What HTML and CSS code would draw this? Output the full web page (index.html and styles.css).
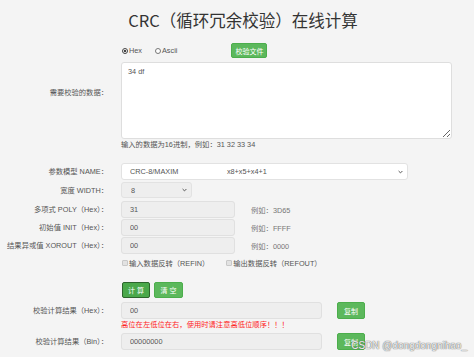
FILE: index.html
```html
<!DOCTYPE html>
<html lang="zh-CN">
<head>
    <meta charset="UTF-8">
    <meta name="viewport" content="width=device-width, initial-scale=1.0">
    <title>CRC（循环冗余校验）在线计算</title>
    <link rel="stylesheet" href="styles.css">
</head>
<body>
    <div class="container">
        <h1 class="title">CRC（循环冗余校验）在线计算</h1>

        <div class="row row-type">
            <span class="label"></span>
            <div class="field">
                <label class="radio"><input type="radio" name="type" checked>Hex</label>
                <label class="radio"><input type="radio" name="type">Ascii</label>
                <button class="btn btn-file">校验文件</button>
            </div>
        </div>

        <div class="row row-data">
            <label class="label label-top">需要校验的数据：</label>
            <div class="field">
                <textarea class="data-input">34 df</textarea>
                <div class="hint">输入的数据为16进制，例如：31 32 33 34</div>
            </div>
        </div>

        <div class="row row-name">
            <label class="label">参数模型 NAME：</label>
            <div class="field">
                <div class="select-wrap select-name">
                    <select>
                        <option>CRC-8/MAXIM&nbsp;&nbsp;&nbsp;&nbsp;&nbsp;&nbsp;&nbsp;&nbsp;&nbsp;&nbsp;&nbsp;&nbsp;&nbsp;&nbsp;&nbsp;&nbsp;&nbsp;&nbsp;&nbsp;&nbsp;&nbsp;&nbsp;&nbsp;&nbsp;x8+x5+x4+1</option>
                    </select>
                    <svg class="arrow" width="5" height="4" viewBox="0 0 5 4"><polyline points="0.6,1 2.5,2.9 4.4,1" fill="none" stroke="#555" stroke-width="1"/></svg>
                </div>
            </div>
        </div>

        <div class="row row-width">
            <label class="label">宽度 WIDTH：</label>
            <div class="field">
                <div class="select-wrap select-width">
                    <select>
                        <option>8</option>
                    </select>
                    <svg class="arrow" width="5" height="4" viewBox="0 0 5 4"><polyline points="0.6,1 2.5,2.9 4.4,1" fill="none" stroke="#555" stroke-width="1"/></svg>
                </div>
            </div>
        </div>

        <div class="row row-param">
            <label class="label">多项式 POLY（Hex）：</label>
            <div class="field">
                <input class="text-input param-input" type="text" value="31" readonly>
                <span class="example">例如：3D65</span>
            </div>
        </div>

        <div class="row row-param">
            <label class="label">初始值 INIT（Hex）：</label>
            <div class="field">
                <input class="text-input param-input" type="text" value="00" readonly>
                <span class="example">例如：FFFF</span>
            </div>
        </div>

        <div class="row row-param">
            <label class="label">结果异或值 XOROUT（Hex）：</label>
            <div class="field">
                <input class="text-input param-input" type="text" value="00" readonly>
                <span class="example">例如：0000</span>
            </div>
        </div>

        <div class="row row-check">
            <span class="label"></span>
            <div class="field">
                <label class="check"><input type="checkbox" disabled>输入数据反转（REFIN）</label>
                <label class="check"><input type="checkbox" disabled>输出数据反转（REFOUT）</label>
            </div>
        </div>

        <div class="row row-actions">
            <span class="label"></span>
            <div class="field">
                <button class="btn btn-calc">计算</button>
                <button class="btn btn-clear">清空</button>
            </div>
        </div>

        <div class="row row-result">
            <label class="label">校验计算结果（Hex）：</label>
            <div class="field">
                <input class="text-input result-input" type="text" value="00" readonly>
                <button class="btn btn-copy">复制</button>
            </div>
        </div>

        <div class="row row-warn">
            <span class="label"></span>
            <div class="field warn">高位在左低位在右，使用时请注意高低位顺序！！！</div>
        </div>

        <div class="row row-result row-bin">
            <label class="label">校验计算结果（Bin）：</label>
            <div class="field">
                <input class="text-input result-input" type="text" value="00000000" readonly>
                <button class="btn btn-copy">复制</button>
            </div>
        </div>
    </div>

    <div class="watermark">CSDN @dongdongnihao_</div>
</body>
</html>
```

FILE: styles.css
```css
* {
    margin: 0;
    padding: 0;
    box-sizing: border-box;
}

body {
    font-family: 'Liberation Sans', 'Noto Sans CJK SC', sans-serif;
    font-size: 7.3px;
    color: #555;
    background: #f4f4f4;
    min-height: 357px;
    overflow: hidden;
}

.container {
    padding-top: 8px;
}

.title {
    font-family: 'Noto Sans CJK SC', sans-serif;
    font-weight: normal;
    font-size: 16.5px;
    line-height: 24px;
    height: 24px;
    color: #333;
    text-align: center;
    padding-left: 12px;
}

.row {
    display: grid;
    grid-template-columns: 108px 1fr;
    column-gap: 13px;
    align-items: center;
}

.label {
    text-align: right;
    white-space: nowrap;
    line-height: 9px;
    color: #555;
}

.label-top {
    align-self: start;
    padding-top: 26px;
}

.field {
    display: flex;
    align-items: center;
    white-space: nowrap;
}

/* type row */
.row-type {
    margin-top: 11px;
    height: 14px;
}

.radio {
    display: flex;
    align-items: center;
    margin-right: 12px;
    color: #555;
}

.radio input {
    appearance: none;
    -webkit-appearance: none;
    width: 6px;
    height: 6px;
    margin: 0 1px 0 1px;
    border: 1px solid #777;
    border-radius: 50%;
    background: #fff;
}

.radio input:checked {
    background: radial-gradient(circle, #444 0 1.4px, #fff 1.6px);
    border-color: #444;
}

.btn {
    font-family: 'Noto Sans CJK SC', sans-serif;
    font-size: 7px;
    color: #fff;
    background: #5cb85c;
    border: 1px solid #4cae4c;
    border-radius: 2px;
    height: 15px;
    cursor: pointer;
}

.btn-file {
    width: 36px;
    margin-left: 42px;
}

/* data */
.row-data {
    margin-top: 5px;
}

.data-input {
    display: block;
    width: 331px;
    height: 77px;
    padding: 4px 6px;
    font-family: 'Liberation Sans', sans-serif;
    font-size: 7.3px;
    color: #555;
    background: #fff;
    border: 1px solid #dedede;
    border-radius: 3px;
    outline: none;
}

.field:has(.data-input) {
    display: block;
}

.hint {
    margin-top: 2px;
    line-height: 8px;
    color: #555;
}

/* selects */
.select-wrap {
    position: relative;
}

.select-wrap select {
    appearance: none;
    -webkit-appearance: none;
    width: 100%;
    height: 100%;
    padding-left: 8px;
    font-family: 'Liberation Sans', sans-serif;
    font-size: 7.3px;
    color: #555;
    border: 1px solid #e2e2e2;
    border-radius: 3px;
    outline: none;
}

.select-wrap .arrow {
    position: absolute;
    right: 5px;
    top: 50%;
    margin-top: -2px;
}

.row-name {
    margin-top: 14px;
    height: 17px;
}

.select-name {
    width: 287px;
    height: 17px;
}

.select-name select {
    background: #fff;
}

.row-width {
    margin-top: 2px;
    height: 16px;
}

.select-width {
    width: 71px;
    height: 16px;
}

.select-width select {
    background: #eee;
    padding-left: 9px;
}

/* params */
.row-param {
    margin-top: 1px;
    height: 17px;
}

.row-width + .row-param {
    margin-top: 3px;
}

.text-input {
    height: 17px;
    padding-left: 8px;
    font-family: 'Liberation Sans', sans-serif;
    font-size: 7.3px;
    color: #555;
    background: #eee;
    border: 1px solid #e0e0e0;
    border-radius: 3px;
    outline: none;
}

.param-input {
    width: 114px;
}

.example {
    margin-left: 16px;
    color: #777;
}

/* checks */
.row-check {
    margin-top: 4px;
    height: 8px;
}

.check {
    display: flex;
    align-items: center;
    color: #555;
    margin-right: 16px;
}

.check input {
    appearance: none;
    -webkit-appearance: none;
    width: 6px;
    height: 6px;
    margin: 0 1px 0 1px;
    background: #e2e2e2;
    border: 1px solid #c8c8c8;
    border-radius: 1px;
}

/* actions */
.row-actions {
    margin-top: 16px;
    height: 16px;
}

.row-actions .btn {
    height: 16px;
    letter-spacing: 2px;
    padding-left: 2px;
}

.btn-calc {
    width: 28px;
    margin-left: 1px;
    background: #4aa84a;
    border: 1.5px solid #2c652c;
}

.btn-clear {
    width: 29px;
    margin-left: 4px;
}

/* results */
.row-result {
    margin-top: 4px;
    height: 17px;
}

.result-input {
    width: 201px;
}

.btn-copy {
    width: 28px;
    height: 17px;
    margin-left: 15px;
}

.row-warn {
    margin-top: 2px;
    height: 8px;
}

.warn {
    color: #f22;
    line-height: 8px;
}

.row-bin {
    margin-top: 4px;
}

.watermark {
    position: absolute;
    right: 7px;
    bottom: 6px;
    font-family: 'Liberation Sans', sans-serif;
    font-size: 10px;
    color: rgba(255, 255, 255, 0.92);
    text-shadow: 0 0 1px #666, 0 0 1px #666;
}
```
